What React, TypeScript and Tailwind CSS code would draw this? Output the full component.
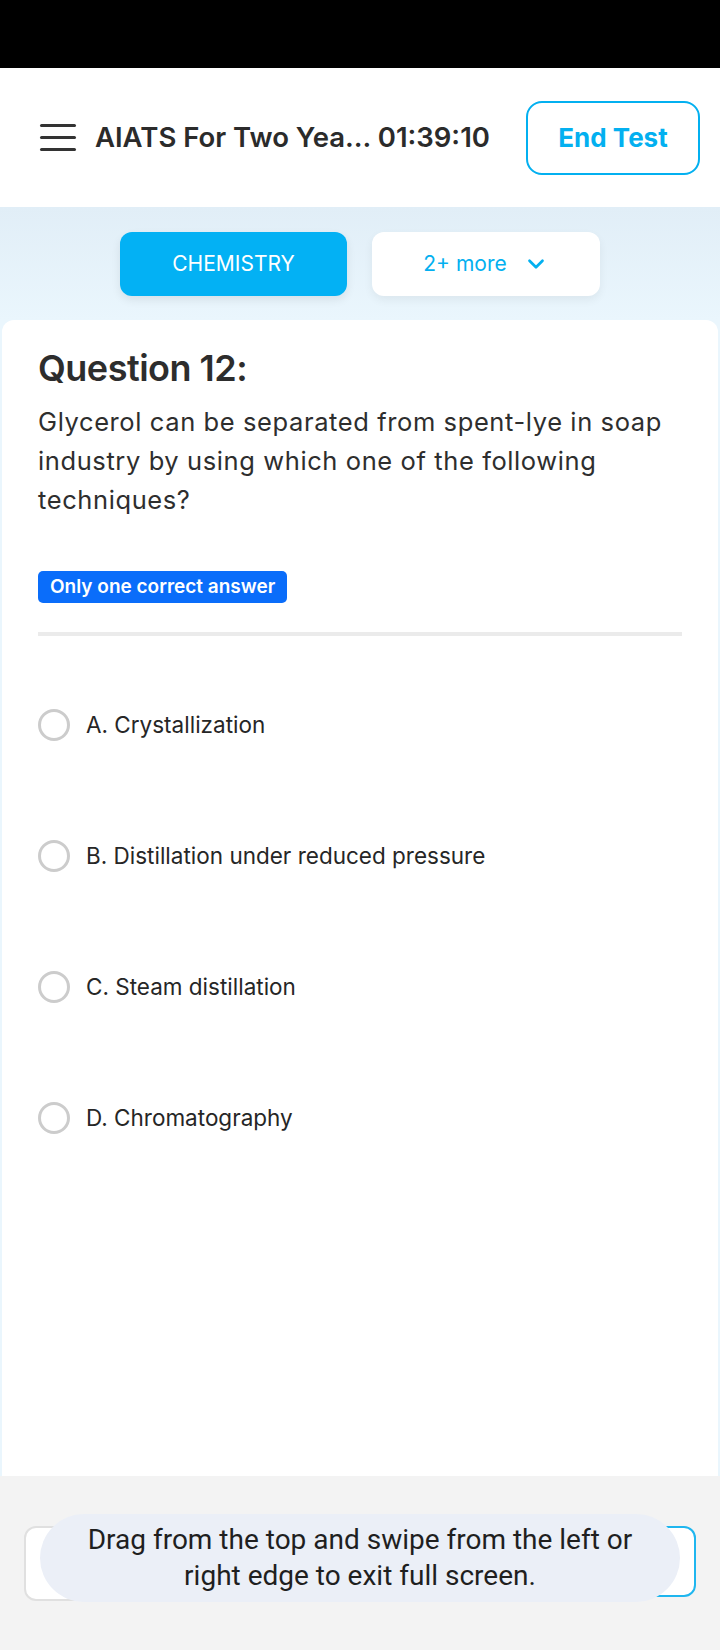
import { ChevronDown } from 'lucide-react';

const options = [
  { id: 'A', label: 'Crystallization' },
  { id: 'B', label: 'Distillation under reduced pressure' },
  { id: 'C', label: 'Steam distillation' },
  { id: 'D', label: 'Chromatography' },
];

const Header = () => (
  <header className="flex h-[139px] items-center bg-white pl-[40px] pr-[20px]">
    {/* Menu icon */}
    <div className="flex w-[36px] flex-col gap-[9px]">
      <span className="h-[3px] w-full rounded-full bg-[#333]" />
      <span className="h-[3px] w-full rounded-full bg-[#333]" />
      <span className="h-[3px] w-full rounded-full bg-[#333]" />
    </div>
    <h1 className="ml-[19px] text-[27.5px] font-semibold text-[#2b2b2b]">
      AIATS For Two Yea... 01:39:10
    </h1>
    <button className="ml-auto h-[74px] w-[174px] rounded-[16px] border-2 border-[#03b0f0] text-[26px] font-bold text-[#03b0f0]">
      End Test
    </button>
  </header>
);

const SubjectBar = () => (
  <div className="flex h-[113px] justify-center gap-[25px] bg-gradient-to-b from-[#e1eef7] to-[#eaf6fd] pt-[25px]">
    <button className="h-[64px] w-[227px] rounded-[12px] bg-[#03b1f4] text-[21px] text-white shadow-[0_4px_10px_rgba(0,0,0,0.08)]">
      CHEMISTRY
    </button>
    <button className="flex h-[64px] w-[228px] items-center justify-center gap-[16px] rounded-[12px] bg-white text-[21px] text-[#03b0f0] shadow-[0_4px_10px_rgba(0,0,0,0.06)]">
      2+ more
      <ChevronDown size={26} strokeWidth={2.5} />
    </button>
  </div>
);

const Option = ({ id, label }: { id: string; label: string }) => (
  <div className="flex h-[131px] items-start gap-[16px]">
    <span className="h-[32px] w-[32px] shrink-0 rounded-full border-[3px] border-[#cccccc]" />
    <span className="pt-[1px] text-[22.5px] leading-[30px] text-[#262626]">
      {id}. {label}
    </span>
  </div>
);

export default function App() {
  return (
    <div className="flex min-h-[1650px] w-[720px] flex-col bg-[#f3f3f3] font-['Inter',sans-serif]">
      <div className="h-[68px] bg-black" />
      <Header />
      <div className="bg-[#eaf6fd]">
        <SubjectBar />
        <main className="mx-[2px] h-[1156px] rounded-t-[12px] bg-white px-[36px] pt-[24px]">
          <h2 className="text-[36px] font-semibold leading-[48px] tracking-[-0.5px] text-[#2d2d2d]">
            Question 12:
          </h2>
          <p className="mt-[10px] text-[25.5px] leading-[39px] tracking-[0.6px] text-[#2e2e2e]">
            Glycerol can be separated from spent-lye in soap industry by using which one of the following
            techniques?
          </p>
          <span className="mt-[52px] inline-block rounded-[5px] bg-[#0a6dfa] px-[12px] text-[19px] font-semibold leading-[32px] text-white">
            Only one correct answer
          </span>
          <div className="mt-[29px] h-[4px] w-[644px] bg-[#ebebeb]" />
          <div className="mt-[73px]">
            {options.map((o) => (
              <Option key={o.id} id={o.id} label={o.label} />
            ))}
          </div>
        </main>
      </div>

      <footer className="relative flex flex-1 gap-[20px] bg-[#f3f3f3] px-[24px] pt-[50px]">
        <div className="h-[75px] flex-1 rounded-[12px] border-2 border-[#e0e0e0] bg-white" />
        <div className="h-[71px] flex-1 rounded-[12px] border-2 border-[#1fb6ef] bg-white" />

        {/* System toast */}
        <div className="absolute left-[40px] top-[38px] flex h-[88px] w-[640px] items-center justify-center rounded-full bg-[#ebeff7] px-[30px] text-center font-['Roboto',sans-serif] text-[28px] leading-[36px] text-[#1f1f1f]">
          Drag from the top and swipe from the left or right edge to exit full screen.
        </div>
      </footer>
    </div>
  );
}
